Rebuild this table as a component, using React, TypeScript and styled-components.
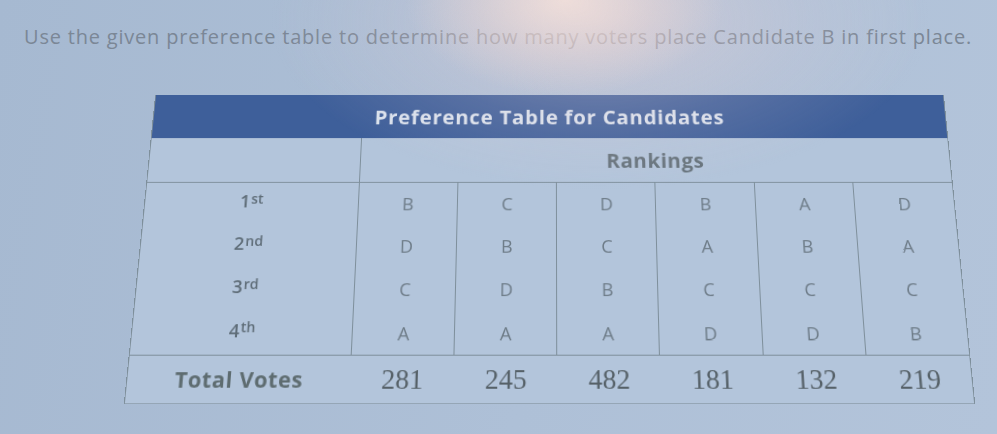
import React from "react";
import styled, { createGlobalStyle } from "styled-components";

const Global = createGlobalStyle`
  html, body {
    margin: 0;
    padding: 0;
    width: 997px;
    height: 434px;
    overflow: hidden;
    background: linear-gradient(100deg, #a6b9d1 0%, #aec0d7 55%, #b3c4da 100%);
  }
  #root { height: 434px; }
`;

const Page = styled.div`
  position: relative;
  width: 997px;
  height: 434px;
  padding-top: 26px;
  box-sizing: border-box;
  font-family: "Open Sans", "DejaVu Sans", sans-serif;
`;

const Glare = styled.div`
  position: absolute;
  inset: 0;
  pointer-events: none;
  background:
    radial-gradient(ellipse 160px 95px at 565px 0px, rgba(252, 228, 218, 0.75) 0%, rgba(246, 220, 212, 0.35) 55%, rgba(240, 215, 215, 0) 100%),
    radial-gradient(ellipse 330px 170px at 600px 20px, rgba(238, 212, 214, 0.45) 0%, rgba(235, 210, 215, 0.15) 60%, rgba(235, 210, 215, 0) 100%);
`;

const Question = styled.p`
  margin: 0 0 0 24px;
  font-size: 20px;
  letter-spacing: 0.8px;
  line-height: 22px;
  color: #7b8796;
  white-space: nowrap;
`;

const Table = styled.div`
  display: grid;
  grid-template-columns: 216px repeat(6, 1fr);
  grid-template-rows: 47px 48px repeat(4, 44px) 46px;
  width: 819px;
  margin: 37px 0 0 140px;
  border: 1.5px solid #7e8f9b;
  border-top: none;
  background: #b3c5db;
  box-sizing: border-box;
  transform: perspective(1000px) rotateX(13.9deg);
  transform-origin: 50% 50%;
`;

const Title = styled.div`
  grid-column: 1 / -1;
  display: flex;
  align-items: center;
  justify-content: center;
  background: #3e5f9a;
  color: #dbe3ee;
  font-weight: 700;
  font-size: 21px;
  letter-spacing: 0.8px;
`;

const Cell = styled.div<{ $right?: boolean; $bottom?: boolean; $span?: number }>`
  display: flex;
  align-items: center;
  justify-content: center;
  border-right: ${(p) => (p.$right ? "1.5px solid #7e8f9b" : "none")};
  border-bottom: ${(p) => (p.$bottom ? "1.5px solid #7e8f9b" : "none")};
  grid-column: ${(p) => (p.$span ? `span ${p.$span}` : "auto")};
  color: #6e7c88;
  font-size: 18px;
`;

const Heading = styled(Cell)`
  font-weight: 700;
  font-size: 21px;
  letter-spacing: 0.5px;
  color: #66737c;
`;

const Ordinal = styled(Cell)`
  font-weight: 600;
  font-size: 18px;
  color: #5f6d78;
  padding-bottom: 6px;
  box-sizing: border-box;
  sup {
    font-size: 14px;
    margin-left: 1px;
    position: relative;
    top: -3px;
  }
`;

const TotalLabel = styled(Cell)`
  font-weight: 700;
  font-size: 21px;
  letter-spacing: 0.6px;
  color: #5e6c70;
`;

const Votes = styled(Cell)`
  font-family: "Liberation Serif", "DejaVu Serif", serif;
  font-size: 27px;
  color: #566168;
`;

const ranks = [
  ["1", "st"],
  ["2", "nd"],
  ["3", "rd"],
  ["4", "th"],
];

const columns = [
  ["B", "D", "C", "A"],
  ["C", "B", "D", "A"],
  ["D", "C", "B", "A"],
  ["B", "A", "C", "D"],
  ["A", "B", "C", "D"],
  ["D", "A", "C", "B"],
];

const totals = [281, 245, 482, 181, 132, 219];

export default function App() {
  return (
    <>
      <Global />
      <Page>
        <Question>
          Use the given preference table to determine how many voters place Candidate B in first place.
        </Question>
        <Table>
          <Title>Preference Table for Candidates</Title>
          <Cell $right $bottom />
          <Heading $span={6} $bottom>
            Rankings
          </Heading>
          {ranks.map((r, ri) => (
            <React.Fragment key={r[0]}>
              <Ordinal $right $bottom={ri === 3}>
                {r[0]}
                <sup>{r[1]}</sup>
              </Ordinal>
              {columns.map((c, ci) => (
                <Cell key={ci} $right={ci < 5} $bottom={ri === 3}>
                  {c[ri]}
                </Cell>
              ))}
            </React.Fragment>
          ))}
          <TotalLabel>Total Votes</TotalLabel>
          {totals.map((t) => (
            <Votes key={t}>{t}</Votes>
          ))}
        </Table>
        <Glare />
      </Page>
    </>
  );
}
